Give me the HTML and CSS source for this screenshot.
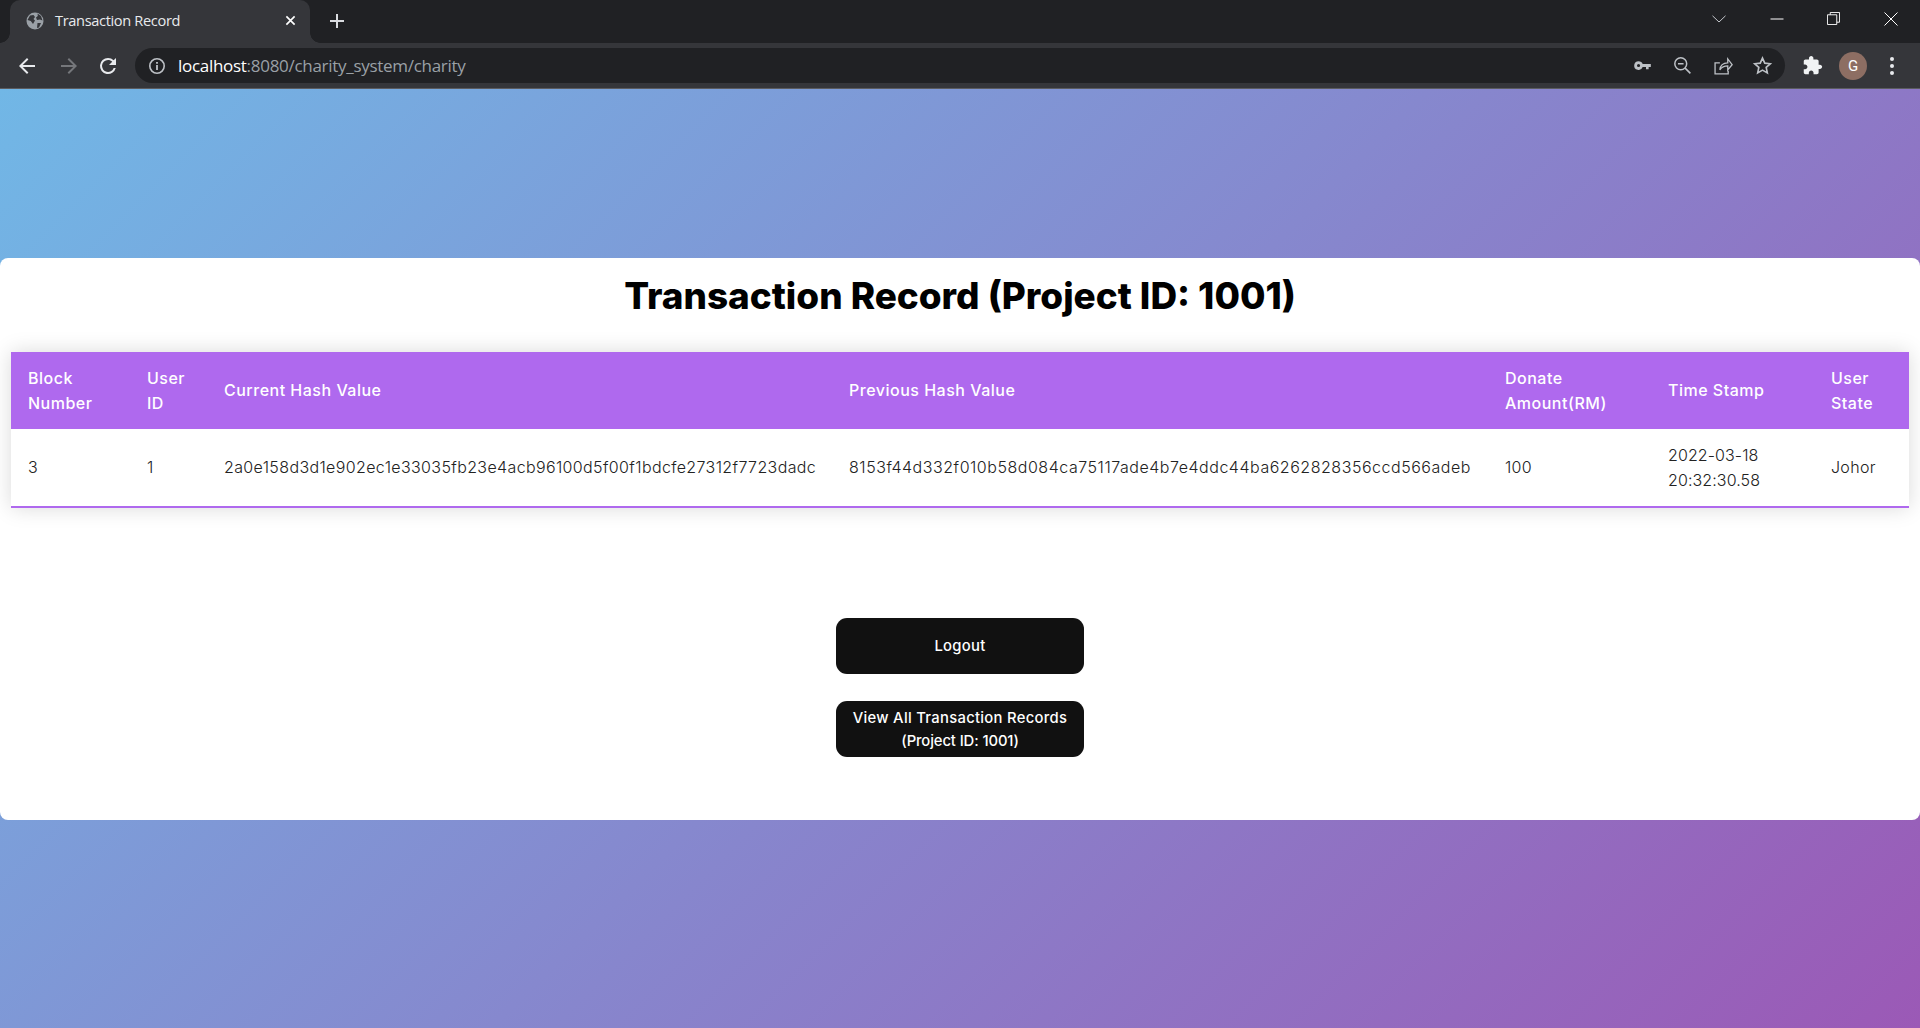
FILE: index.html
```html
<!DOCTYPE html>
<html lang="en">
<head>
<meta charset="utf-8">
<title>Transaction Record</title>
<link rel="stylesheet" href="styles.css">
</head>
<body>
<header class="browser">
  <div class="tabstrip">
    <div class="tab">
      <svg class="favicon" viewBox="0 0 18 18"><circle cx="9" cy="9" r="8.500" fill="#9aa0a6"/><path d="M4 3.500 7.500 3l1.500 2-1.500 2L9 8.500 7 12 4.800 9 1.500 8zM11.500 1.500l3.500 2.500 1.500 4.500-2.500-1-3 .5-1-2.500 1.800-1.500zM11.500 11h3.500l-2 4.500-2 .5z" fill="#35363a"/></svg>
      <span class="tab-title">Transaction Record</span>
      <svg class="tab-close" viewBox="0 0 12 12"><path d="M1.500 1.500l9 9m0-9l-9 9" stroke="#fff" stroke-width="1.800" fill="none"/></svg>
    </div>
    <svg class="newtab" viewBox="0 0 16 16"><path d="M8 1v14M1 8h14" stroke="#dadce0" stroke-width="2" fill="none"/></svg>
    <div class="winctl">
      <svg class="ctl ctl-chev" viewBox="0 0 14 8"><path d="M.5.800 7 7 13.500.800" stroke="#c4c7cc" fill="none"/></svg>
      <svg class="ctl ctl-min" viewBox="0 0 14 14"><path d="M.500 7h13" stroke="#fff" fill="none"/></svg>
      <svg class="ctl ctl-max" viewBox="0 0 14 14"><path d="M.500 3h10v10.500H.500zM3.500 3V.500h10v10.500h-3" stroke="#fff" fill="none"/></svg>
      <svg class="ctl ctl-close" viewBox="0 0 14 14"><path d="M.500.500l13 13m0-13l-13 13" stroke="#fff" fill="none"/></svg>
    </div>
  </div>
  <div class="toolbar">
    <span class="tool tool-back"><svg viewBox="0 0 24 24"><path d="M20 11H7.800l5.600-5.600L12 4l-8 8 8 8 1.400-1.400L7.800 13H20z" fill="#e8eaed"/></svg></span>
    <span class="tool tool-forward"><svg viewBox="0 0 24 24"><path d="M12 4l-1.400 1.400 5.600 5.600H4v2h12.200l-5.600 5.600L12 20l8-8z" fill="#75777b"/></svg></span>
    <span class="tool tool-reload"><svg viewBox="0 0 24 24"><path d="M17.650 6.350A7.960 7.960 0 0 0 12 4a8 8 0 1 0 7.740 10h-2.080A6 6 0 1 1 12 6c1.660 0 3.140.69 4.220 1.780L13 11h7V4z" fill="#e8eaed"/></svg></span>
    <div class="omnibox">
      <svg class="info" viewBox="0 0 18 18"><circle cx="9" cy="9" r="7.200" stroke="#bdc1c6" stroke-width="1.600" fill="none"/><path d="M9 8v5M9 5v1.800" stroke="#bdc1c6" stroke-width="1.800" fill="none"/></svg>
      <span class="url"><span class="url-host">localhost</span>:8080/charity_system/charity</span>
      <span class="omni-icon"><svg viewBox="0 0 24 24"><path d="M7.500 7a5 5 0 1 0 4.700 6.700H16v2.500h3v-2.500h2.500v-3.400H12.200A5 5 0 0 0 7.500 7zm0 3.200a1.800 1.800 0 1 1 0 3.600 1.800 1.800 0 0 1 0-3.600z" fill="#bdc1c6"/></svg></span>
      <span class="omni-icon"><svg viewBox="0 0 24 24"><circle cx="10" cy="10" r="6.800" stroke="#bdc1c6" stroke-width="1.700" fill="none"/><path d="M15 15l6 6M6.800 10h6.400" stroke="#bdc1c6" stroke-width="1.800" fill="none"/></svg></span>
      <span class="omni-icon"><svg viewBox="0 0 24 24"><path d="M9 9H3.500v12.500h15V18M9 17c.5-5 4-8 9-8V4.500L23 11l-5 6v-4.500c-4 0-7 1.500-9 4.500z" stroke="#bdc1c6" stroke-width="1.500" fill="none"/></svg></span>
      <span class="omni-icon"><svg viewBox="0 0 24 24"><path d="M12 3.500l2.600 5.800 6.300.7-4.700 4.200 1.300 6.300-5.500-3.200-5.500 3.200 1.300-6.300L3.100 10l6.300-.7z" stroke="#bdc1c6" stroke-width="1.900" fill="none"/></svg></span>
    </div>
    <span class="tool tool-ext"><svg viewBox="0 0 24 24"><path class="puzzle" d="M20.500 11H19V7c0-1.100-.9-2-2-2h-4V3.500C13 2.120 11.880 1 10.500 1S8 2.120 8 3.500V5H4c-1.100 0-1.990.9-1.990 2v3.800H3.500c1.490 0 2.700 1.210 2.700 2.700s-1.210 2.700-2.700 2.700H2V20c0 1.100.9 2 2 2h3.800v-1.500c0-1.490 1.210-2.700 2.700-2.700 1.490 0 2.700 1.210 2.700 2.700V22H17c1.100 0 2-.9 2-2v-4h1.500c1.380 0 2.500-1.120 2.500-2.500S21.880 11 20.500 11z" fill="#f1f3f4"/></svg></span>
    <span class="tool tool-avatar"><span class="avatar">G</span></span>
    <span class="tool tool-menu"><svg viewBox="0 0 24 24"><circle cx="12" cy="5" r="2" fill="#e8eaed"/><circle cx="12" cy="12" r="2" fill="#e8eaed"/><circle cx="12" cy="19" r="2" fill="#e8eaed"/></svg></span>
  </div>
</header>
<main class="page">
  <section class="card">
    <h1 class="title">Transaction Record (Project ID: 1001)</h1>
    <table class="records">
      <colgroup>
        <col class="c-block"><col class="c-user"><col class="c-cur"><col class="c-prev"><col class="c-amt"><col class="c-time"><col class="c-state">
      </colgroup>
      <thead>
        <tr>
          <th>Block<br>Number</th>
          <th>User<br>ID</th>
          <th>Current Hash Value</th>
          <th>Previous Hash Value</th>
          <th>Donate<br>Amount(RM)</th>
          <th>Time Stamp</th>
          <th>User<br>State</th>
        </tr>
      </thead>
      <tbody>
        <tr>
          <td>3</td>
          <td>1</td>
          <td class="hash-cur">2a0e158d3d1e902ec1e33035fb23e4acb96100d5f00f1bdcfe27312f7723dadc</td>
          <td class="hash-prev">8153f44d332f010b58d084ca75117ade4b7e4ddc44ba6262828356ccd566adeb</td>
          <td>100</td>
          <td class="stamp">2022-03-18<br>20:32:30.58</td>
          <td>Johor</td>
        </tr>
      </tbody>
    </table>
    <div class="actions">
      <button class="btn" type="button">Logout</button>
      <button class="btn" type="button">View All Transaction Records<br><span class="btn-sub">(Project ID: 1001)</span></button>
    </div>
  </section>
</main>
</body>
</html>
```

FILE: styles.css
```css
* { box-sizing: border-box; }
html, body { margin: 0; height: 100%; }
body { display: flex; flex-direction: column; overflow: hidden; font-family: Inter, "Liberation Sans", sans-serif; }

.browser { flex: none; }
.tabstrip { height: 43px; background: #202124; display: flex; align-items: center; padding-left: 10px; }
.tab { position: relative; width: 300px; height: 43px; background: #35363a; border-radius: 10px 10px 0 0; display: flex; align-items: center; padding: 0 14px 2px 16px; }
.tab::before, .tab::after { content: ""; position: absolute; bottom: 0; width: 10px; height: 10px; background: radial-gradient(circle at var(--cx) 0, #202124 9.5px, #35363a 10px); }
.tab::before { left: -10px; --cx: 0; }
.tab::after { right: -10px; --cx: 100%; }
.favicon { width: 18px; height: 18px; flex: none; }
.tab-title { flex: 1; margin-left: 11px; color: #e8eaed; font: 14.6px/20px "Open Sans", sans-serif; letter-spacing: -.35px; position: relative; top: -1px; }
.tab-close { width: 11px; height: 11px; flex: none; }
.newtab { width: 16px; height: 16px; margin: 0 0 2px 19px; flex: none; }
.winctl { margin-left: auto; display: flex; align-items: center; height: 100%; padding-bottom: 6px; }
.ctl { flex: none; }
.ctl-chev { width: 14px; height: 8px; margin-right: 44px; }
.ctl-min { width: 14px; height: 14px; margin-right: 43px; }
.ctl-max { width: 13px; height: 13px; margin-right: 44px; }
.ctl-close { width: 14px; height: 14px; margin-right: 22px; }

.toolbar { height: 46px; background: #35363a; border-bottom: 1px solid #5b5c60; display: flex; align-items: center; padding-left: 9px; }
.tool { width: 36px; height: 36px; flex: none; display: flex; align-items: center; justify-content: center; }
.tool svg { width: 24px; height: 24px; }
.tool-forward { margin-left: 6px; }
.tool-reload { margin-left: 3px; }
.tool-ext { margin-left: 9px; }
.tool-ext svg { width: 21px; height: 21px; }
.tool-avatar { margin-left: 5px; }
.tool-menu { margin-left: 3px; }
.omnibox { width: 1650px; height: 35px; margin-left: 9px; flex: none; background: #202124; border-radius: 18px; display: flex; align-items: center; padding: 0 3px 0 13px; }
.info { width: 18px; height: 18px; flex: none; }
.url { flex: 1; margin-left: 12px; color: #9aa0a6; font: 17px/22px "Open Sans", sans-serif; letter-spacing: -.29px; white-space: nowrap; }
.url-host { color: #fff; }
.omni-icon { width: 40px; height: 35px; flex: none; display: flex; align-items: center; justify-content: center; }
.omni-icon svg { width: 21px; height: 21px; }
.avatar { width: 28px; height: 28px; border-radius: 50%; background: #8d6e63; color: #fff; display: flex; align-items: center; justify-content: center; font: 15px Roboto, sans-serif; }

.page { flex: 1; background: linear-gradient(135deg, #71b7e6, #9b59b6); padding-top: 169px; }
.card { background: #fff; height: 562px; border-radius: 8px; padding: 9px 11px 0; }
.title { margin: 0 0 28px; height: 57px; font-size: 36.9px; font-weight: 800; line-height: 57px; text-align: center; color: #000; }
.records { width: 1898px; table-layout: fixed; border-collapse: separate; border-spacing: 0; box-shadow: 0 0 20px rgba(0, 0, 0, .15); font-size: 16px; }
.c-block { width: 119px; }
.c-user { width: 77px; }
.c-cur { width: 625px; }
.c-prev { width: 656px; }
.c-amt { width: 163px; }
.c-time { width: 163px; }
.c-state { width: 95px; }
.records th { height: 77px; padding: 0 17px; background: #af69ee; color: #fff; font-weight: 450; line-height: 25px; text-align: left; letter-spacing: .5px; }
.records td { height: 79px; padding: 0 17px; border-bottom: 2px solid #af69ee; color: #222; font-weight: 300; line-height: 25px; white-space: nowrap; letter-spacing: .3px; }
.records td.hash-cur { letter-spacing: .37px; }
.records td.hash-prev { letter-spacing: .53px; }
.records td.stamp { letter-spacing: .1px; }
.actions { margin-top: 110px; display: flex; flex-direction: column; align-items: center; gap: 27px; }
.btn { width: 248px; height: 56px; border: 0; border-radius: 11px; background: #111; color: #fff; font: 500 14.800px/23px Inter, sans-serif; letter-spacing: .3px; padding: 1px 0 0; }
.btn-sub { letter-spacing: -.1px; }
```
